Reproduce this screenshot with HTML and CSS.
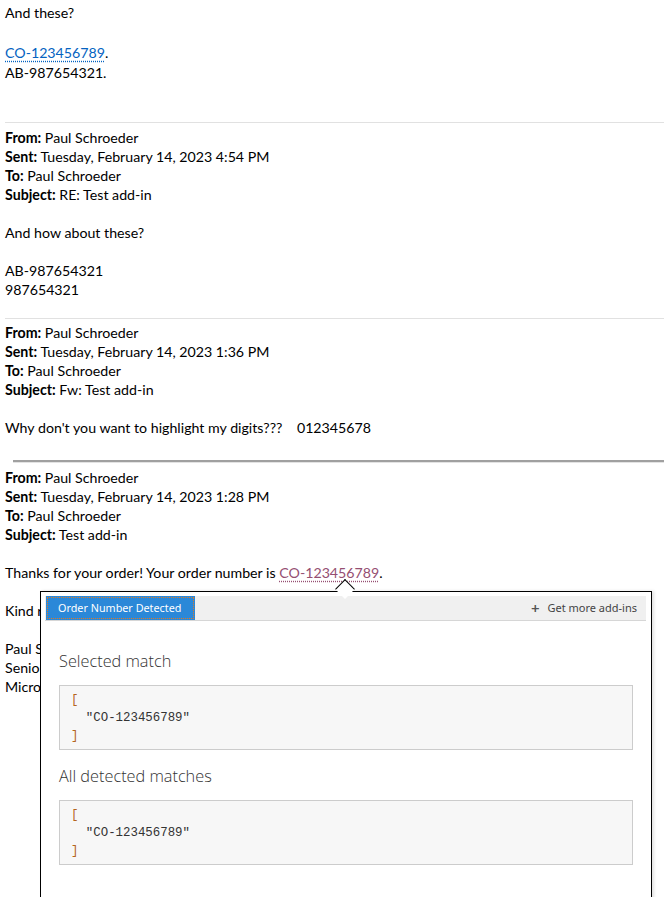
FILE: index.html
```html
<!DOCTYPE html>
<html>
<head>
<meta charset="utf-8">
<link rel="stylesheet" href="styles.css">
</head>
<body>
<div class="mail">
  <div class="block first">
    <div class="ln">And these?</div>
    <div class="ln"></div>
    <div class="ln"><span class="link">CO-123456789</span>.</div>
    <div class="ln">AB-987654321.</div>
    <div class="spacer"></div>
  </div>
  <hr class="sep light">
  <div class="block">
    <div class="ln"><b>From:</b> Paul Schroeder</div>
    <div class="ln"><b>Sent:</b> Tuesday, February 14, 2023 4:54 PM</div>
    <div class="ln"><b>To:</b> Paul Schroeder</div>
    <div class="ln"><b>Subject:</b> RE: Test add-in</div>
    <div class="ln"></div>
    <div class="ln">And how about these?</div>
    <div class="ln"></div>
    <div class="ln">AB-987654321</div>
    <div class="ln">987654321</div>
    <div class="ln"></div>
  </div>
  <hr class="sep light">
  <div class="block">
    <div class="ln"><b>From:</b> Paul Schroeder</div>
    <div class="ln"><b>Sent:</b> Tuesday, February 14, 2023 1:36 PM</div>
    <div class="ln"><b>To:</b> Paul Schroeder</div>
    <div class="ln"><b>Subject:</b> Fw: Test add-in</div>
    <div class="ln"></div>
    <div class="ln">Why don't you want to highlight my digits???&nbsp;&nbsp;&nbsp; 012345678</div>
    <div class="ln"></div>
  </div>
  <hr class="sep dark">
  <div class="block">
    <div class="ln"><b>From:</b> Paul Schroeder</div>
    <div class="ln"><b>Sent:</b> Tuesday, February 14, 2023 1:28 PM</div>
    <div class="ln"><b>To:</b> Paul Schroeder</div>
    <div class="ln"><b>Subject:</b> Test add-in</div>
    <div class="ln"></div>
    <div class="ln">Thanks for your order! Your order number is <span class="link visited">CO-123456789</span>.</div>
    <div class="ln"></div>
    <div class="ln">Kind regards,</div>
    <div class="ln"></div>
    <div class="ln">Paul Schroeder</div>
    <div class="ln">Senior Content Developer</div>
    <div class="ln">Microsoft</div>
  </div>
</div>

<div class="popup">
  <div class="arrow"></div>
  <div class="tabbar">
    <div class="tab">Order Number Detected</div>
    <div class="more"><span class="plus">+</span>Get more add-ins</div>
  </div>
  <div class="content">
    <h2 class="title">Selected match</h2>
    <pre class="code"><span class="br">[</span>
  "CO-123456789"
<span class="br">]</span></pre>
    <h2 class="title">All detected matches</h2>
    <pre class="code"><span class="br">[</span>
  "CO-123456789"
<span class="br">]</span></pre>
  </div>
</div>
</body>
</html>
```
FILE: styles.css
```css
html, body {
  margin: 0;
  padding: 0;
  background: #fff;
  height: 897px;
  overflow: hidden;
}
body {
  position: relative;
  font-family: "Lato", "Liberation Sans", sans-serif;
  font-size: 14.2px;
  color: #000;
}
.mail {
  padding-left: 5px;
}
.block {
  line-height: 19px;
}
.block.first {
  padding-top: 3px;
  line-height: 20px;
}
.ln {
  min-height: 19px;
  white-space: pre;
}
.first .ln { min-height: 20px; }
.spacer { height: 39px; }
.ln b { font-weight: 700; }
.link {
  color: #0563c1;
  text-decoration: underline dotted;
  text-decoration-color: #0563c1;
  text-underline-offset: 3px;
}
.link.visited {
  color: #954f72;
  text-decoration-color: #954f72;
}
.sep {
  border: 0;
  margin: 0;
}
.sep.light {
  height: 1px;
  background: #e1e1e1;
  margin: 0 0 4.5px 0;
}
.sep.dark {
  height: 2px;
  background: #a0a0a0;
  border-bottom: 1px solid #e3e3e3;
  margin: 4px 0 4.5px 8px;
}

.popup {
  position: absolute;
  left: 40px;
  top: 591px;
  width: 602px;
  height: 340px;
  border: 1px solid #000;
  background: #fff;
  box-shadow: 2px 0 3px rgba(0,0,0,0.12);
  padding: 4px 4px 0 4px;
  font-family: "Noto Sans", "Open Sans", sans-serif;
}
.arrow {
  position: absolute;
  left: 297px;
  top: -10px;
  width: 13px;
  height: 13px;
  background: #fff;
  border-left: 1px solid #000;
  border-top: 1px solid #000;
  transform: rotate(45deg);
}
.tabbar {
  display: flex;
  align-items: stretch;
  justify-content: space-between;
  height: 24px;
  background: #f0f0f0;
  border-bottom: 1px solid #d6d6d6;
  margin-right: 1px;
}
.tab {
  background: #2b88d8;
  color: #fff;
  font-size: 10.8px;
  line-height: 24px;
  padding: 0 14px 0 12px;
  margin-left: 1px;
  outline: 1px dotted #e07b24;
  outline-offset: -2px;
}
.more {
  color: #444;
  font-size: 11px;
  line-height: 24px;
  padding-right: 9px;
  display: flex;
  align-items: center;
}
.plus {
  font-size: 15px;
  font-weight: 600;
  color: #555;
  margin-right: 8px;
}
.content {
  padding: 0 14px 0 14px;
}
.title {
  margin: 0;
  font-family: "Open Sans", "Noto Sans", sans-serif;
  font-weight: 300;
  font-size: 16.3px;
  color: #333;
  line-height: 24px;
}
.content .title:first-child {
  margin-top: 28px;
}
.code {
  margin: 12px 0 14px 0;
  box-sizing: content-box;
  background: #f7f7f7;
  border: 1px solid #cccccc;
  padding: 5px 11px 0 11px;
  font-family: "Liberation Mono", "DejaVu Sans Mono", monospace;
  font-size: 12.4px;
  line-height: 18px;
  color: #333;
  height: 58px;
}
.br {
  color: #b5651d;
}
```
